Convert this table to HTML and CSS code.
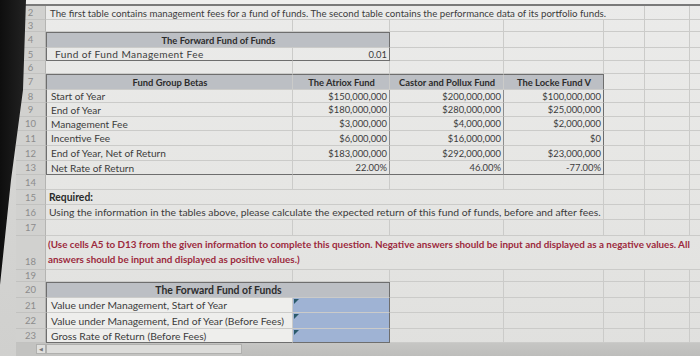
FILE: index.html
```html
<!DOCTYPE html>
<html lang="en">
<head>
<meta charset="utf-8">
<title>Fund of Funds</title>
<link rel="stylesheet" href="styles.css">
</head>
<body>
<div class="page">
  <div class="bezel"></div>
  <div class="sheet">
    <div class="row h6 top"><div class="rn"></div><div class="c"></div><div class="c"></div><div class="c"></div><div class="c"></div><div class="c"></div><div class="c"></div><div class="c"></div></div>

    <div class="row h14"><div class="rn">2</div><div class="c s5 txt intro">The first table contains management fees for a fund of funds. The second table contains the performance data of its portfolio funds.</div><div class="c"></div><div class="c"></div></div>

    <div class="row h12"><div class="rn">3</div><div class="c"></div><div class="c"></div><div class="c"></div><div class="c"></div><div class="c"></div><div class="c"></div><div class="c"></div></div>

    <div class="row h16"><div class="rn">4</div><div class="c s2 hdr ctr bt bl br">The Forward Fund of Funds</div><div class="c"></div><div class="c"></div><div class="c"></div><div class="c"></div><div class="c"></div></div>

    <div class="row h13"><div class="rn">5</div><div class="c lbl wide bl bb">Fund of Fund Management Fee</div><div class="c num br bb">0.01</div><div class="c"></div><div class="c"></div><div class="c"></div><div class="c"></div><div class="c"></div></div>

    <div class="row h13"><div class="rn">6</div><div class="c"></div><div class="c"></div><div class="c"></div><div class="c"></div><div class="c"></div><div class="c"></div><div class="c"></div></div>

    <div class="row h16"><div class="rn">7</div><div class="c hdr ctr bt bl">Fund Group Betas</div><div class="c hdr ctr bt">The Atriox Fund</div><div class="c hdr ctr bt">Castor and Pollux Fund</div><div class="c hdr ctr bt br">The Locke Fund V</div><div class="c"></div><div class="c"></div><div class="c"></div></div>

    <div class="row h13"><div class="rn">8</div><div class="c lbl bl">Start of Year</div><div class="c num vr">$150,000,000</div><div class="c num vr">$200,000,000</div><div class="c num br">$100,000,000</div><div class="c"></div><div class="c"></div><div class="c"></div></div>

    <div class="row h14"><div class="rn">9</div><div class="c lbl bl">End of Year</div><div class="c num vr">$180,000,000</div><div class="c num vr">$280,000,000</div><div class="c num br">$25,000,000</div><div class="c"></div><div class="c"></div><div class="c"></div></div>

    <div class="row h14"><div class="rn">10</div><div class="c lbl bl">Management Fee</div><div class="c num vr">$3,000,000</div><div class="c num vr">$4,000,000</div><div class="c num br">$2,000,000</div><div class="c"></div><div class="c"></div><div class="c"></div></div>

    <div class="row h15"><div class="rn">11</div><div class="c lbl bl">Incentive Fee</div><div class="c num vr">$6,000,000</div><div class="c num vr">$16,000,000</div><div class="c num br">$0</div><div class="c"></div><div class="c"></div><div class="c"></div></div>

    <div class="row h15"><div class="rn">12</div><div class="c lbl bl">End of Year, Net of Return</div><div class="c num vr">$183,000,000</div><div class="c num vr">$292,000,000</div><div class="c num br">$23,000,000</div><div class="c"></div><div class="c"></div><div class="c"></div></div>

    <div class="row h14"><div class="rn">13</div><div class="c lbl bl bb">Net Rate of Return</div><div class="c num vr bb">22.00%</div><div class="c num vr bb">46.00%</div><div class="c num br bb">-77.00%</div><div class="c"></div><div class="c"></div><div class="c"></div></div>

    <div class="row h15"><div class="rn">14</div><div class="c"></div><div class="c"></div><div class="c"></div><div class="c"></div><div class="c"></div><div class="c"></div><div class="c"></div></div>

    <div class="row h15 mid"><div class="rn">15</div><div class="c s4 txt strong">Required:</div><div class="c"></div><div class="c"></div><div class="c"></div></div>

    <div class="row h15 mid"><div class="rn">16</div><div class="c s4 txt">Using the information in the tables above, please calculate the expected return of this fund of funds, before and after fees.</div><div class="c"></div><div class="c"></div><div class="c"></div></div>

    <div class="row h16"><div class="rn">17</div><div class="c"></div><div class="c"></div><div class="c"></div><div class="c"></div><div class="c"></div><div class="c"></div><div class="c"></div></div>

    <div class="row h34 mid"><div class="rn rn-end">18</div><div class="c s7 red">(Use cells A5 to D13 from the given information to complete this question. Negative answers should be input and displayed as a negative values. All<br>answers should be input and displayed as positive values.)</div></div>

    <div class="row h12"><div class="rn">19</div><div class="c"></div><div class="c"></div><div class="c"></div><div class="c"></div><div class="c"></div><div class="c"></div><div class="c"></div></div>

    <div class="row h16 low"><div class="rn">20</div><div class="c s2 hdr ctr bt bl br">The Forward Fund of Funds</div><div class="c"></div><div class="c"></div><div class="c"></div><div class="c"></div><div class="c"></div></div>

    <div class="row h15 low"><div class="rn">21</div><div class="c lbl light bl">Value under Management, Start of Year</div><div class="c blue br"></div><div class="c"></div><div class="c"></div><div class="c"></div><div class="c"></div><div class="c"></div></div>

    <div class="row h16 low"><div class="rn">22</div><div class="c lbl light bl">Value under Management, End of Year (Before Fees)</div><div class="c blue br"></div><div class="c"></div><div class="c"></div><div class="c"></div><div class="c"></div><div class="c"></div></div>

    <div class="row h14 low"><div class="rn">23</div><div class="c lbl light bl bb">Gross Rate of Return (Before Fees)</div><div class="c blue br bb"></div><div class="c"></div><div class="c"></div><div class="c"></div><div class="c"></div><div class="c"></div></div>

    <div class="scroll">
      <div class="sc-left"><span class="arrow">&#9664;</span></div>
      <div class="sc-track"></div>
      <div class="sc-rest"></div>
    </div>
  </div>
</div>
</body>
</html>
```

FILE: styles.css
```css
* { box-sizing: border-box; }

html, body {
  margin: 0;
  padding: 0;
}

body {
  width: 700px;
  height: 356px;
  overflow: hidden;
  background: #d4d4d2;
  font-family: Lato, "Open Sans", sans-serif;
  color: #3c3c3c;
}

.page {
  position: relative;
  width: 700px;
  height: 356px;
  overflow: hidden;
  padding-left: 16px;
  background: linear-gradient(to bottom, #dadad8, #d0d0ce);
}

.bezel {
  position: absolute;
  left: 0;
  top: 0;
  width: 30px;
  height: 356px;
  background: linear-gradient(to right, #0e0e0e, #262626);
  clip-path: polygon(0 0, 26px 0, 23px 90px, 11px 180px, 0 285px);
  z-index: 2;
}

.sheet {
  width: 760px;
  font-size: 10.1px;
  background: linear-gradient(to bottom, #ebebea 0%, #e6e6e4 50%, #e0e0de 100%);
}

.row {
  display: grid;
  grid-template-columns: 30px 247px 97px 114px 100px 41px 45px 84px;
}

.h6 { height: 6px; }
.h12 { height: 12px; }
.h13 { height: 13px; }
.h14 { height: 14px; }
.h15 { height: 15px; }
.h16 { height: 16px; }
.h34 { height: 34px; }

.top .c, .top .rn {
  background: #efefee;
  border-bottom: 2px solid #7a7a7a;
  border-right: none;
}

.rn {
  display: flex;
  align-items: center;
  justify-content: center;
  background: #d1d1cf;
  color: #8c8c8c;
  font-size: 9.5px;
  border-bottom: 1px solid #c2c2c0;
  border-right: 1px solid #b4b4b2;
}

.rn-end {
  align-items: flex-end;
  padding-bottom: 2px;
}

.c {
  display: flex;
  align-items: center;
  padding: 0 2px 0 3px;
  white-space: nowrap;
  border-right: 1px solid #cbcbc9;
  border-bottom: 1px solid #cbcbc9;
  min-width: 0;
}

.s2 { grid-column: span 2; }
.s4 { grid-column: span 4; }
.s5 { grid-column: span 5; }
.s7 { grid-column: span 7; }

.txt { overflow: visible; }

.intro { font-size: 9.7px; padding-left: 4px; }

.mid { font-size: 10.35px; }
.low { font-size: 10.3px; }

.strong { font-weight: 700; color: #2a2a2a; }

.hdr {
  background: #bcbfc4;
  font-weight: 700;
  font-size: 9.4px;
  color: #2c2c2c;
}

.low .hdr { font-size: 10.4px; }

.ctr { justify-content: center; }

.lbl { padding-left: 4px; }

.wide {
  letter-spacing: 0.4px;
  padding-left: 8px;
}

.num {
  justify-content: flex-end;
  padding-right: 2px;
  font-size: 9.4px;
}

.light { background: #eeeeec; }

.blue {
  position: relative;
  background: #9fb3d4;
}

.blue::before {
  content: "";
  position: absolute;
  left: 1px;
  top: 1px;
  border-top: 5px solid #2b5a6c;
  border-right: 5px solid transparent;
}

.bt { border-top: 1px solid #6e6e6e; }
.bl { border-left: 1px solid #6e6e6e; }
.br { border-right: 1px solid #6e6e6e; }
.bb { border-bottom: 1px solid #6e6e6e; }
.vr { border-right: 1px solid #8e8e8e; }

.red {
  flex-direction: column;
  align-items: flex-start;
  justify-content: flex-end;
  padding: 0 0 2px 2px;
  color: #9c2a3d;
  font-weight: 700;
  font-size: 9.85px;
  line-height: 15px;
  border-right: none;
}

.scroll {
  display: flex;
  height: 13px;
  background: #c3c3c1;
}

.sc-left {
  width: 30px;
  display: flex;
  justify-content: flex-end;
  padding-top: 1px;
}

.arrow {
  display: flex;
  align-items: center;
  justify-content: center;
  width: 10px;
  height: 10px;
  font-size: 5px;
  color: #777;
  background: #e0e0de;
  border: 1px solid #b0b0ae;
}

.sc-track {
  width: 196px;
  height: 10px;
  margin-top: 1px;
  background: #dcdcda;
  border: 1px solid #b0b0ae;
}

.sc-rest {
  flex: 1;
  background: linear-gradient(to bottom, #c6c6c4, #bdbdbb);
}
```
